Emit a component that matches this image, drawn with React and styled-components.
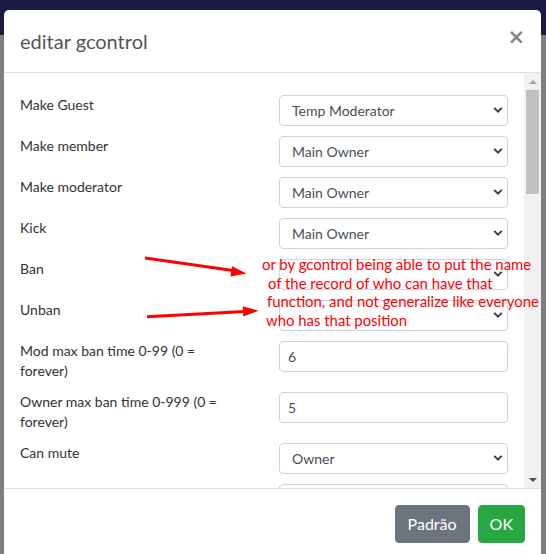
import React from "react";
import styled, { createGlobalStyle } from "styled-components";

const GlobalStyle = createGlobalStyle`
  html, body { margin: 0; padding: 0; }
  body {
    background: #7e7e7e;
    font-family: "Lato", "Segoe UI", sans-serif;
  }
  * { box-sizing: border-box; }
`;

const Page = styled.div`
  position: relative;
  width: 546px;
  height: 554px;
  overflow: hidden;
  padding: 10px 5px 0 4px;
  background: linear-gradient(#1b1a45 0 35px, #7e7e7e 35px);
`;

const Modal = styled.div`
  background: #fff;
  border-radius: 5px;
  height: 580px;
  display: flex;
  flex-direction: column;
`;

const Header = styled.div`
  display: flex;
  align-items: flex-start;
  padding: 16px;
  border-bottom: 1px solid #dee2e6;
`;

const Title = styled.h5`
  margin: 0;
  font-size: 20px;
  line-height: 30px;
  font-weight: 400;
  color: #555;
`;

const Close = styled.button`
  margin: -16px -16px -16px auto;
  padding: 17px 16px 15px;
  border: 0;
  background: transparent;
  font-family: "DejaVu Sans", sans-serif;
  font-size: 21px;
  font-weight: 700;
  line-height: 1;
  color: #000;
  opacity: 0.48;
`;

const Body = styled.div`
  display: flex;
  height: 415px;
  overflow: hidden;
`;

const Content = styled.div`
  flex: 1;
  padding: 21.5px 16px 0;
  display: flex;
  flex-direction: column;
  gap: 10px;
  overflow: hidden;
`;

const Row = styled.div`
  display: grid;
  grid-template-columns: 229px 229px;
  justify-content: space-between;
  align-items: start;
`;

const Label = styled.label`
  max-width: 215px;
  min-height: 20px;
  font-size: 14px;
  line-height: 20.6px;
  color: #333;
`;

const SelectBox = styled.div`
  position: relative;
  height: 31px;
`;

const Select = styled.select`
  appearance: none;
  width: 100%;
  height: 31px;
  border: 1px solid #ced4da;
  border-radius: 4px;
  background: #fff;
  padding: 0 24px 0 12px;
  font-family: inherit;
  font-size: 14px;
  color: #495057;
`;

const Chevron = styled.svg`
  position: absolute;
  right: 5px;
  top: 50%;
  transform: translateY(-50%);
  pointer-events: none;
`;

const Input = styled.input`
  width: 100%;
  height: 31px;
  border: 1px solid #ced4da;
  border-radius: 4px;
  background: #fff;
  padding: 0 8px;
  font-family: inherit;
  font-size: 14px;
  color: #495057;
`;

const Track = styled.div`
  width: 17px;
  flex-shrink: 0;
  background: #f1f1f1;
  display: flex;
  flex-direction: column;
`;

const ArrowBtn = styled.div`
  height: 17px;
  display: flex;
  align-items: center;
  justify-content: center;
`;

const Tri = styled.div`
  width: 0;
  height: 0;
  border-left: 4px solid transparent;
  border-right: 4px solid transparent;
  ${(p) =>
    p.$down
      ? `border-top: 4px solid ${p.$color};`
      : `border-bottom: 4px solid ${p.$color};`}
`;

const Thumb = styled.div`
  height: 104px;
  margin: 0 2px;
  background: #c1c1c1;
`;

const Spacer = styled.div`
  flex: 1;
`;

const Footer = styled.div`
  border-top: 1px solid #dee2e6;
  padding: 16px;
  display: flex;
  justify-content: flex-end;
  gap: 8px;
`;

const Button = styled.button`
  padding: 6px ${(p) => p.$px || 12}px;
  border: 1px solid ${(p) => p.$bg};
  border-radius: 4px;
  background: ${(p) => p.$bg};
  color: #fff;
  font-family: inherit;
  font-size: 16px;
  line-height: 24px;
`;

const Note = styled.div`
  position: absolute;
  left: 262px;
  top: 255px;
  color: #f00;
  font-family: "Lato", sans-serif;
  font-size: 14.9px;
  line-height: 18.7px;
  white-space: nowrap;
  pointer-events: none;
`;

const NoteLine = styled.div`
  padding-left: ${(p) => p.$indent || 0}px;
`;

const Overlay = styled.svg`
  position: absolute;
  left: 0;
  top: 0;
  pointer-events: none;
`;

const rows = [
  { label: "Make Guest", type: "select", value: "Temp Moderator" },
  { label: "Make member", type: "select", value: "Main Owner" },
  { label: "Make moderator", type: "select", value: "Main Owner" },
  { label: "Kick", type: "select", value: "Main Owner" },
  { label: "Ban", type: "select", value: "" },
  { label: "Unban", type: "select", value: "" },
  { label: "Mod max ban time 0-99 (0 = forever)", type: "input", value: "6" },
  { label: "Owner max ban time 0-999 (0 = forever)", type: "input", value: "5" },
  { label: "Can mute", type: "select", value: "Owner" },
  { label: "", type: "select", value: "" },
];

function Field({ type, value }) {
  if (type === "input") return <Input defaultValue={value} />;
  return (
    <SelectBox>
      <Select defaultValue={value}>
        <option value={value}>{value}</option>
      </Select>
      <Chevron width="10" height="7" viewBox="0 0 10 7">
        <path d="M1.2 1.4 L5 5.2 L8.8 1.4" fill="none" stroke="#3a3f44" strokeWidth="2" />
      </Chevron>
    </SelectBox>
  );
}

export default function App() {
  return (
    <>
      <GlobalStyle />
      <Page>
        <Modal>
          <Header>
            <Title>editar gcontrol</Title>
            <Close>×</Close>
          </Header>
          <Body>
            <Content>
              {rows.map((r, i) => (
                <Row key={i}>
                  <Label>{r.label}</Label>
                  <Field type={r.type} value={r.value} />
                </Row>
              ))}
            </Content>
            <Track>
              <ArrowBtn>
                <Tri $color="#a3a3a3" />
              </ArrowBtn>
              <Thumb />
              <Spacer />
              <ArrowBtn>
                <Tri $down $color="#505050" />
              </ArrowBtn>
            </Track>
          </Body>
          <Footer>
            <Button $bg="#6c757d">Padrão</Button>
            <Button $bg="#28a745" $px={11}>OK</Button>
          </Footer>
        </Modal>
        <Overlay width="546" height="554" viewBox="0 0 546 554">
          <line x1="145" y1="258" x2="233" y2="270.5" stroke="#f00" strokeWidth="3" />
          <polygon points="246.5,273.5 232,266.3 230.4,276.4" fill="#f00" />
          <line x1="147" y1="316.7" x2="245" y2="311.4" stroke="#f00" strokeWidth="3" />
          <polygon points="258.5,310.7 243.3,316.5 242.7,306.3" fill="#f00" />
        </Overlay>
        <Note>
          <NoteLine>or by gcontrol being able to put the name</NoteLine>
          <NoteLine $indent={6}>of the record of who can have that</NoteLine>
          <NoteLine $indent={5}>function, and not generalize like everyone</NoteLine>
          <NoteLine $indent={4}>who has that position</NoteLine>
        </Note>
      </Page>
    </>
  );
}
